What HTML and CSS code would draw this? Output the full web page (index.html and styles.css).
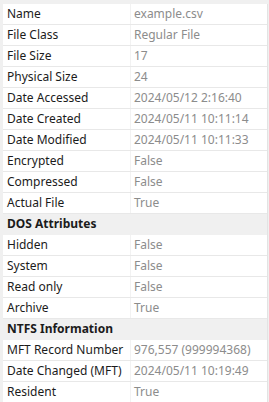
FILE: index.html
```html
<!DOCTYPE html>
<html lang="en">
<head>
<meta charset="utf-8">
<title>Properties</title>
<link rel="stylesheet" href="styles.css">
</head>
<body>
<div class="grid">
  <div class="row"><span class="key">Name</span><span class="val">example.csv</span></div>
  <div class="row"><span class="key">File Class</span><span class="val">Regular File</span></div>
  <div class="row"><span class="key">File Size</span><span class="val">17</span></div>
  <div class="row"><span class="key">Physical Size</span><span class="val">24</span></div>
  <div class="row"><span class="key">Date Accessed</span><span class="val">2024/05/12 2:16:40</span></div>
  <div class="row"><span class="key">Date Created</span><span class="val">2024/05/11 10:11:14</span></div>
  <div class="row"><span class="key">Date Modified</span><span class="val">2024/05/11 10:11:33</span></div>
  <div class="row"><span class="key">Encrypted</span><span class="val">False</span></div>
  <div class="row"><span class="key">Compressed</span><span class="val">False</span></div>
  <div class="row"><span class="key">Actual File</span><span class="val">True</span></div>
  <div class="row group"><span class="key">DOS Attributes</span><span class="val"></span></div>
  <div class="row"><span class="key">Hidden</span><span class="val">False</span></div>
  <div class="row"><span class="key">System</span><span class="val">False</span></div>
  <div class="row"><span class="key">Read only</span><span class="val">False</span></div>
  <div class="row"><span class="key">Archive</span><span class="val">True</span></div>
  <div class="row group"><span class="key">NTFS Information</span><span class="val"></span></div>
  <div class="row"><span class="key">MFT Record Number</span><span class="val">976,557 (999994368)</span></div>
  <div class="row"><span class="key">Date Changed (MFT)</span><span class="val">2024/05/11 10:19:49</span></div>
  <div class="row"><span class="key">Resident</span><span class="val">True</span></div>
</div>
</body>
</html>
```
FILE: styles.css
```css
html, body {
  margin: 0;
  padding: 0;
  background: #f0f0f0;
}

body {
  padding: 4px 0 0 3px;
  font-family: "Noto Sans", "Open Sans", sans-serif;
  font-size: 12px;
  overflow: hidden;
}

.grid {
  display: flex;
  flex-direction: column;
  background: #ffffff;
  width: 264px;
  border-right: 1px solid #e3e3e3;
}

.row {
  display: grid;
  grid-template-columns: 128px 1fr;
  height: 20px;
  border-bottom: 1px solid #e8e8e8;
  align-items: center;
}

.key {
  padding-left: 4px;
  color: #1b1b1b;
  white-space: nowrap;
  line-height: 20px;
  border-right: 1px solid #f2f2f2;
  height: 20px;
}

.val {
  padding-left: 3px;
  color: #8c8c8c;
  white-space: nowrap;
  line-height: 20px;
}

.group {
  background: #f0f0f0;
  border-bottom-color: #f0f0f0;
}

.group .key {
  font-weight: 700;
  border-right: none;
}
```
